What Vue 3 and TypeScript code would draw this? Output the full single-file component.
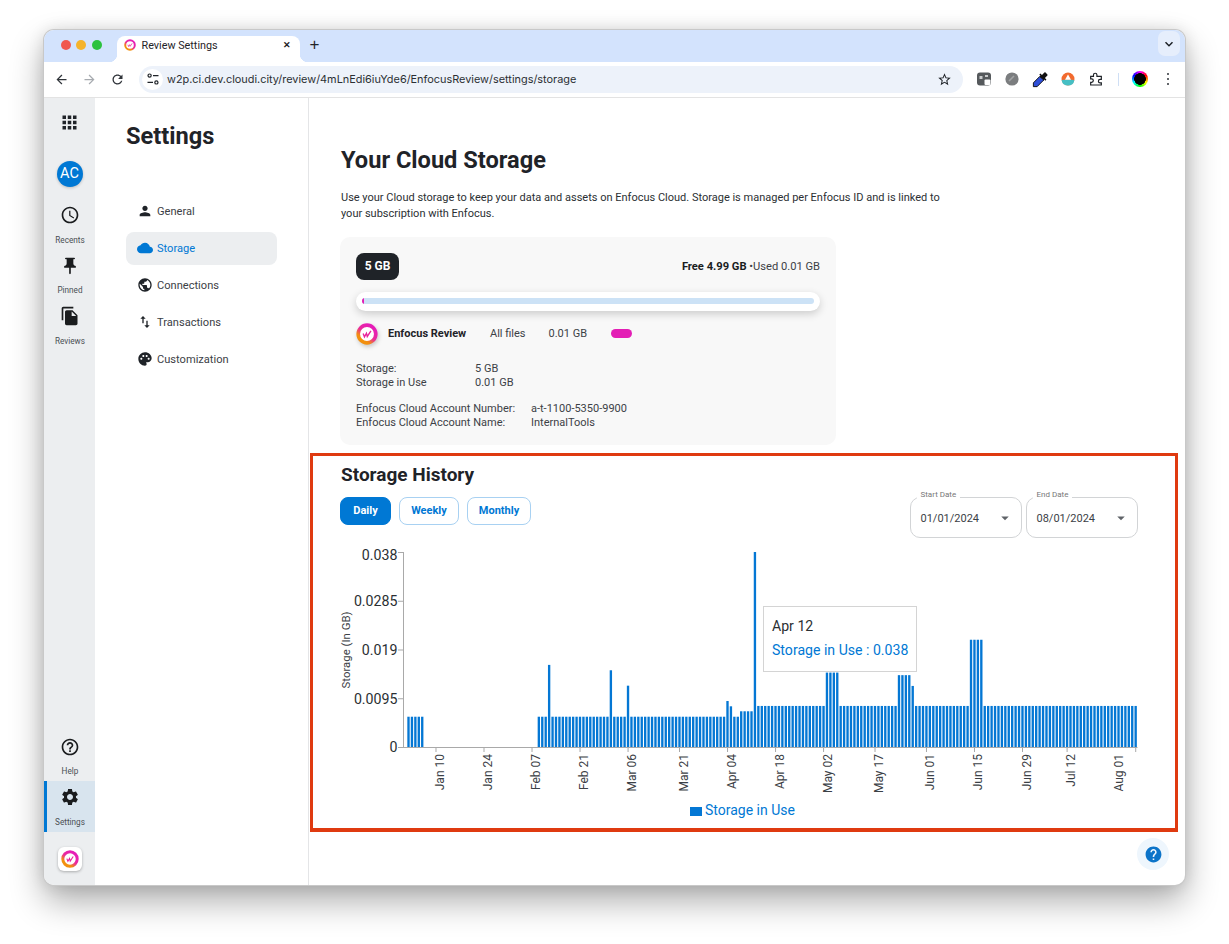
<script setup lang="ts">
import { computed } from 'vue'

const icons: Record<string, string> = {
  apps: 'M4 8h4V4H4v4zm6 12h4v-4h-4v4zm-6 0h4v-4H4v4zm0-6h4v-4H4v4zm6 0h4v-4h-4v4zm6-10v4h4V4h-4zm-6 4h4V4h-4v4zm6 6h4v-4h-4v4zm0 6h4v-4h-4v4z',
  schedule: 'M11.99 2C6.47 2 2 6.48 2 12s4.47 10 9.99 10C17.52 22 22 17.52 22 12S17.52 2 11.99 2zM12 20c-4.42 0-8-3.58-8-8s3.58-8 8-8 8 3.58 8 8-3.58 8-8 8zm.5-13H11v6l5.25 3.15.75-1.23-4.5-2.67z',
  pin: 'M16 9V4h1c.55 0 1-.45 1-1s-.45-1-1-1H7c-.55 0-1 .45-1 1s.45 1 1 1h1v5c0 1.66-1.34 3-3 3v2h5.97v7l1 1 1-1v-7H19v-2c-1.66 0-3-1.34-3-3z',
  files: 'M16 1H4c-1.1 0-2 .9-2 2v14h2V3h12V1zm-1 4l6 6v10c0 1.1-.9 2-2 2H7.99C6.89 23 6 22.1 6 21l.01-14c0-1.1.89-2 1.99-2h7zm-1 7h5.5L14 6.5V12z',
  helpOutline: 'M11 18h2v-2h-2v2zm1-16C6.48 2 2 6.48 2 12s4.48 10 10 10 10-4.48 10-10S17.52 2 12 2zm0 18c-4.41 0-8-3.59-8-8s3.59-8 8-8 8 3.59 8 8-3.59 8-8 8zm0-14c-2.21 0-4 1.79-4 4h2c0-1.1.9-2 2-2s2 .9 2 2c0 2-3 1.75-3 5h2c0-2.25 3-2.5 3-5 0-2.21-1.79-4-4-4z',
  gear: 'M19.14 12.94c.04-.3.06-.61.06-.94 0-.32-.02-.64-.07-.94l2.03-1.58c.18-.14.23-.41.12-.61l-1.92-3.32c-.12-.22-.37-.29-.59-.22l-2.39.96c-.5-.38-1.03-.7-1.62-.94l-.36-2.54c-.04-.24-.24-.41-.48-.41h-3.84c-.24 0-.43.17-.47.41l-.36 2.54c-.59.24-1.13.57-1.62.94l-2.39-.96c-.22-.08-.47 0-.59.22L2.74 8.87c-.12.21-.08.47.12.61l2.03 1.58c-.05.3-.09.63-.09.94s.02.64.07.94l-2.03 1.58c-.18.14-.23.41-.12.61l1.92 3.32c.12.22.37.29.59.22l2.39-.96c.5.38 1.03.7 1.62.94l.36 2.54c.05.24.24.41.48.41h3.84c.24 0 .44-.17.47-.41l.36-2.54c.59-.24 1.13-.56 1.62-.94l2.39.96c.22.08.47 0 .59-.22l1.92-3.32c.12-.22.07-.47-.12-.61l-2.01-1.58zM12 15.6c-1.98 0-3.6-1.62-3.6-3.6s1.62-3.6 3.6-3.6 3.6 1.62 3.6 3.6-1.62 3.6-3.6 3.6z',
  person: 'M12 12c2.21 0 4-1.79 4-4s-1.79-4-4-4-4 1.79-4 4 1.79 4 4 4zm0 2c-2.67 0-8 1.34-8 4v2h16v-2c0-2.66-5.33-4-8-4z',
  cloud: 'M19.35 10.04C18.67 6.59 15.64 4 12 4 9.11 4 6.6 5.64 5.35 8.04 2.34 8.36 0 10.91 0 14c0 3.31 2.69 6 6 6h13c2.76 0 5-2.24 5-5 0-2.64-2.05-4.78-4.65-4.96z',
  globe: 'M12 2C6.48 2 2 6.48 2 12s4.48 10 10 10 10-4.48 10-10S17.52 2 12 2zm-1 17.93c-3.95-.49-7-3.85-7-7.93 0-.62.08-1.21.21-1.79L9 15v1c0 1.1.9 2 2 2v1.93zm6.9-2.54c-.26-.81-1-1.39-1.9-1.39h-1v-3c0-.55-.45-1-1-1H8v-2h2c.55 0 1-.45 1-1V7h2c1.1 0 2-.9 2-2v-.41c2.93 1.19 5 4.06 5 7.41 0 2.08-.8 3.97-2.1 5.39z',
  swap: 'M16 17.01V10h-2v7.01h-3L15 21l4-3.99h-3zM9 3L5 6.99h3V14h2V6.99h3L9 3z',
  palette: 'M12 2C6.49 2 2 6.49 2 12s4.49 10 10 10c1.38 0 2.5-1.12 2.5-2.5 0-.61-.23-1.2-.64-1.67-.08-.1-.13-.21-.13-.33 0-.28.22-.5.5-.5H16c3.31 0 6-2.69 6-6 0-4.96-4.49-9-10-9zm5.5 11c-.83 0-1.5-.67-1.5-1.5s.67-1.5 1.5-1.5 1.5.67 1.5 1.5-.67 1.5-1.5 1.5zm-3-4c-.83 0-1.5-.67-1.5-1.5S13.67 6 14.5 6s1.5.67 1.5 1.5S15.33 9 14.5 9zM5 11.5c0-.83.67-1.5 1.5-1.5s1.5.67 1.5 1.5S7.33 13 6.5 13 5 12.33 5 11.5zm6-4c0 .83-.67 1.5-1.5 1.5S8 8.33 8 7.5 8.67 6 9.5 6s1.5.67 1.5 1.5z',
  help: 'M12 2C6.48 2 2 6.48 2 12s4.48 10 10 10 10-4.48 10-10S17.52 2 12 2zm1 17h-2v-2h2v2zm2.07-7.75l-.9.92C13.45 12.9 13 13.5 13 15h-2v-.5c0-1.1.45-2.1 1.17-2.83l1.24-1.26c.37-.36.59-.86.59-1.41 0-1.1-.9-2-2-2s-2 .9-2 2H8c0-2.21 1.79-4 4-4s4 1.79 4 4c0 .88-.36 1.68-.93 2.25z',
  caret: 'M7 10l5 5 5-5z',
  back: 'M20 11H7.83l5.59-5.59L12 4l-8 8 8 8 1.41-1.41L7.83 13H20v-2z',
  forward: 'M12 4l-1.41 1.41L16.17 11H4v2h12.17l-5.58 5.59L12 20l8-8z',
  reload: 'M17.65 6.35C16.2 4.9 14.21 4 12 4c-4.42 0-7.99 3.58-7.99 8s3.57 8 7.99 8c3.73 0 6.84-2.55 7.73-6h-2.08c-.82 2.33-3.04 4-5.65 4-3.31 0-6-2.69-6-6s2.69-6 6-6c1.66 0 3.14.69 4.22 1.78L13 11h7V4l-2.35 2.35z',
  star: 'M22 9.24l-7.19-.62L12 2 9.19 8.63 2 9.24l5.46 4.73L5.82 21 12 17.27 18.18 21l-1.63-7.03L22 9.24zM12 15.4l-3.76 2.27 1-4.28-3.32-2.88 4.38-.38L12 6.1l1.71 4.04 4.38.38-3.32 2.88 1 4.28L12 15.4z',
}

const railTop = [
  { label: 'Recents', icon: 'schedule' },
  { label: 'Pinned', icon: 'pin' },
  { label: 'Reviews', icon: 'files' },
]

const navItems = [
  { label: 'General', icon: 'person' },
  { label: 'Storage', icon: 'cloud', active: true },
  { label: 'Connections', icon: 'globe' },
  { label: 'Transactions', icon: 'swap' },
  { label: 'Customization', icon: 'palette' },
]

// chart is drawn in page coordinates, see viewBox on the svg
const x0 = 403.4
const band = 3.43
const baseY = 747
const plotH = 195
const maxVal = 0.038

const y = (v: number) => baseY - (v / maxVal) * plotH
const tickX = (i: number) => x0 + (i + 0.5) * band

function valueAt(i: number): number {
  if (i >= 1 && i <= 5) return 0.0059
  if (i < 39) return 0
  if (i === 42) return 0.016
  if (i === 60) return 0.01495
  if (i === 65) return 0.01195
  if (i === 94) return 0.00896
  if (i === 95) return 0.00793
  if (i >= 98 && i <= 101) return 0.00696
  if (i === 102) return 0.038
  if (i < 103) return 0.0059
  if (i >= 123 && i <= 126) return 0.0145
  if (i >= 144 && i <= 147) return 0.014
  if (i === 148) return 0.0119
  if (i >= 165 && i <= 168) return 0.0209
  return 0.008
}

const bars = computed(() => {
  const out: { x: number; y: number; h: number }[] = []
  for (let i = 0; i < 214; i++) {
    const v = valueAt(i)
    if (v > 0) out.push({ x: x0 + i * band + 0.5, y: y(v), h: (v / maxVal) * plotH })
  }
  return out
})

const yTicks = [
  { label: '0.038', v: 0.038, textY: 560 },
  { label: '0.0285', v: 0.0285, textY: 606 },
  { label: '0.019', v: 0.019, textY: 655 },
  { label: '0.0095', v: 0.0095, textY: 703.5 },
  { label: '0', v: 0, textY: 752 },
]

const xTicks = [
  { label: 'Jan 10', i: 9, dx: 8 },
  { label: 'Jan 24', i: 23, dx: 8 },
  { label: 'Feb 07', i: 37, dx: 8 },
  { label: 'Feb 21', i: 51, dx: 8 },
  { label: 'Mar 06', i: 65, dx: 8 },
  { label: 'Mar 21', i: 80, dx: 8 },
  { label: 'Apr 04', i: 94, dx: 8 },
  { label: 'Apr 18', i: 108, dx: 8 },
  { label: 'May 02', i: 122, dx: 8 },
  { label: 'May 17', i: 137, dx: 8 },
  { label: 'Jun 01', i: 152, dx: 8 },
  { label: 'Jun 15', i: 166, dx: 8 },
  { label: 'Jun 29', i: 180, dx: 8 },
  { label: 'Jul 12', i: 193, dx: 8 },
  // last label gets pushed back so it stays inside the plot
  { label: 'Aug 01', i: 213, dx: -12.5 },
]
</script>

<template>
  <div class="window">
    <svg class="defs" width="0" height="0" aria-hidden="true">
      <defs>
        <linearGradient id="logo-ring" x1="0.8" y1="0.1" x2="0.2" y2="0.9">
          <stop offset="0" stop-color="#e61cb8" />
          <stop offset="0.5" stop-color="#ea2a9c" />
          <stop offset="0.85" stop-color="#f2900f" />
        </linearGradient>
        <symbol id="logo" viewBox="0 0 24 24">
          <circle cx="12" cy="12" r="9.6" fill="#fff" stroke="url(#logo-ring)" stroke-width="4" />
          <path d="M7.8 11.5l1.4 3.6 2.2-3.8.9 3.4 4-6" fill="none" stroke="#e8249c" stroke-width="1.5" />
        </symbol>
      </defs>
    </svg>

    <div class="tabstrip">
      <div class="lights">
        <span class="light red"></span>
        <span class="light yellow"></span>
        <span class="light green"></span>
      </div>
      <div class="tab">
        <svg class="favicon" width="12" height="12"><use href="#logo" /></svg>
        <span class="tab-title">Review Settings</span>
        <span class="tab-close">✕</span>
      </div>
      <span class="new-tab">+</span>
      <div class="strip-gap"></div>
      <div class="tab-menu">
        <svg width="12" height="12" viewBox="0 0 12 12"><path d="M2.5 4.2L6 7.7l3.5-3.5" fill="none" stroke="#1f2328" stroke-width="1.5" /></svg>
      </div>
    </div>

    <div class="toolbar">
      <button class="tool"><svg width="15" height="15" viewBox="0 0 24 24"><path :d="icons.back" /></svg></button>
      <button class="tool muted"><svg width="15" height="15" viewBox="0 0 24 24"><path :d="icons.forward" /></svg></button>
      <button class="tool"><svg width="15" height="15" viewBox="0 0 24 24"><path :d="icons.reload" /></svg></button>
      <div class="omnibox">
        <span class="site-info">
          <svg width="14" height="14" viewBox="0 0 14 14" fill="none" stroke="#1f2328" stroke-width="1.2">
            <circle cx="3.6" cy="3.6" r="1.6" /><path d="M7 3.6h5.5M1.5 10.4H7" /><circle cx="10.4" cy="10.4" r="1.6" />
          </svg>
        </span>
        <span class="url">w2p.ci.dev.cloudi.city/review/4mLnEdi6iuYde6/EnfocusReview/settings/storage</span>
        <svg class="star" width="15" height="15" viewBox="0 0 24 24"><path :d="icons.star" /></svg>
      </div>
      <div class="ext first">
        <svg width="16" height="16" viewBox="0 0 16 16">
          <rect x="1" y="1.5" width="14" height="13" rx="3" fill="#55595c" />
          <rect x="8.5" y="8.5" width="6" height="5.5" rx="1" fill="#fff" />
          <path d="M3.5 5h3v3h-3zM9 4h3v2H9z" fill="#c9cbcc" />
        </svg>
      </div>
      <div class="ext">
        <svg width="16" height="16" viewBox="0 0 16 16">
          <circle cx="8" cy="8" r="6.6" fill="#7b7d7f" />
          <path d="M5 10l5-5" stroke="#a2a4a5" stroke-width="1.6" />
        </svg>
      </div>
      <div class="ext">
        <svg width="19" height="19" viewBox="0 0 24 24">
          <path d="M20.71 5.63l-2.34-2.34c-.39-.39-1.02-.39-1.41 0l-3.12 3.12-1.93-1.91-1.41 1.41 1.42 1.42-1 1L16 13.6l.67-1.52 1.42 1.42 1.41-1.41-1.92-1.92 3.12-3.12c.4-.4.4-1.03.01-1.42z" fill="#111" />
          <path d="M10.9 8.3L3 16.25V21h4.75l8.4-8.4z" fill="#2f4fd8" stroke="#111" stroke-width="1.2" />
        </svg>
      </div>
      <div class="ext">
        <svg width="16" height="16" viewBox="0 0 16 16">
          <circle cx="8" cy="8" r="6.5" fill="#f26a2e" />
          <path d="M1.6 9.2a6.5 6.5 0 0 0 12.8 0L12 8.8H4z" fill="#45bfc4" />
          <path d="M8 3.6L5 8.8h6z" fill="#fff" />
        </svg>
      </div>
      <div class="ext">
        <svg width="16" height="16" viewBox="0 0 24 24" fill="none" stroke="#1f2328" stroke-width="1.8">
          <path d="M4 8h4.2V6a2.6 2.6 0 0 1 5.2 0v2H20v4.6h-1.8a2.6 2.6 0 0 0 0 5.2H20V21H4v-4h1.4a2.6 2.6 0 0 0 0-5.2H4z" />
        </svg>
      </div>
      <span class="sep"></span>
      <div class="ext ring-wrap"><span class="ring"></span></div>
      <div class="ext dots"><i></i><i></i><i></i></div>
    </div>

    <div class="content">
      <aside class="rail">
        <svg class="rail-apps" width="21" height="21" viewBox="0 0 24 24"><path :d="icons.apps" /></svg>
        <div class="avatar">AC</div>
        <div v-for="item in railTop" :key="item.label" class="rail-item">
          <svg width="20" height="20" viewBox="0 0 24 24"><path :d="icons[item.icon]" /></svg>
          <span>{{ item.label }}</span>
        </div>
        <div class="rail-space"></div>
        <div class="rail-item">
          <svg width="20" height="20" viewBox="0 0 24 24"><path :d="icons.helpOutline" /></svg>
          <span>Help</span>
        </div>
        <div class="rail-item current">
          <svg width="20" height="20" viewBox="0 0 24 24"><path :d="icons.gear" /></svg>
          <span>Settings</span>
        </div>
        <div class="rail-logo">
          <svg width="18" height="18"><use href="#logo" /></svg>
        </div>
      </aside>

      <nav class="sidebar">
        <h2 class="sidebar-title">Settings</h2>
        <ul class="nav">
          <li v-for="item in navItems" :key="item.label" class="nav-item" :class="{ active: item.active }">
            <svg width="16" height="16" viewBox="0 0 24 24"><path :d="icons[item.icon]" /></svg>
            <span>{{ item.label }}</span>
          </li>
        </ul>
      </nav>

      <main class="main">
        <div class="top">
          <h1>Your Cloud Storage</h1>
          <p class="intro">Use your Cloud storage to keep your data and assets on Enfocus Cloud. Storage is managed per Enfocus ID and is linked to your subscription with Enfocus.</p>
          <div class="card">
            <div class="card-head">
              <span class="chip">5 GB</span>
              <span class="free"><b>Free 4.99 GB</b> •Used 0.01 GB</span>
            </div>
            <div class="meter"><div class="meter-track"><span class="meter-used"></span></div></div>
            <div class="usage">
              <svg class="usage-logo" width="22" height="22"><use href="#logo" /></svg>
              <b class="usage-name">Enfocus Review</b>
              <span class="usage-files">All files</span>
              <span class="usage-size">0.01 GB</span>
              <span class="usage-pill"></span>
            </div>
            <div class="facts narrow">
              <span>Storage:</span><span>5 GB</span>
              <span>Storage in Use</span><span>0.01 GB</span>
            </div>
            <div class="facts wide">
              <span>Enfocus Cloud Account Number:</span><span>a-t-1100-5350-9900</span>
              <span>Enfocus Cloud Account Name:</span><span>InternalTools</span>
            </div>
          </div>
        </div>

        <section class="history">
          <h2>Storage History</h2>
          <div class="controls">
            <div class="ranges">
              <button class="range on">Daily</button>
              <button class="range">Weekly</button>
              <button class="range">Monthly</button>
            </div>
            <div class="dates">
              <div class="date">
                <label>Start Date</label>
                <span>01/01/2024</span>
                <svg width="18" height="18" viewBox="0 0 24 24"><path :d="icons.caret" /></svg>
              </div>
              <div class="date">
                <label>End Date</label>
                <span>08/01/2024</span>
                <svg width="18" height="18" viewBox="0 0 24 24"><path :d="icons.caret" /></svg>
              </div>
            </div>
          </div>

          <div class="chart">
            <svg width="834" height="280" viewBox="340 545 834 280">
              <text class="axis-title" transform="translate(349.5 650) rotate(-90)" text-anchor="middle">Storage (In GB)</text>
              <rect v-for="(b, i) in bars" :key="i" class="bar" :x="b.x" :y="b.y" width="2.35" :height="b.h" />
              <line class="axis" x1="403.5" y1="552" x2="403.5" :y2="baseY" />
              <line class="axis" x1="403" :y1="baseY + 0.5" x2="1137.5" :y2="baseY + 0.5" />
              <g v-for="t in yTicks" :key="t.label">
                <line class="axis" x1="398" :y1="y(t.v) + 0.5" x2="403" :y2="y(t.v) + 0.5" />
                <text class="y-label" x="397.5" :y="t.textY" text-anchor="end">{{ t.label }}</text>
              </g>
              <g v-for="t in xTicks" :key="t.label">
                <line class="axis" :x1="tickX(t.i)" y1="747" :x2="tickX(t.i)" y2="752" />
                <text class="x-label" :transform="`translate(${tickX(t.i) + t.dx} 754) rotate(-90)`" text-anchor="end">{{ t.label }}</text>
              </g>
              <rect x="690" y="807" width="12" height="9" fill="#0477d4" />
              <text class="legend" x="705" y="815">Storage in Use</text>
            </svg>
            <div class="tooltip">
              <div class="tip-date">Apr 12</div>
              <div class="tip-value">Storage in Use : 0.038</div>
            </div>
          </div>
        </section>

        <button class="help-fab">
          <svg width="19" height="19" viewBox="0 0 24 24"><path :d="icons.help" /></svg>
        </button>
      </main>
    </div>
  </div>
</template>

<style>
html, body {
  background: #fff;
}
#app {
  padding: 30px 44px 59px;
}
</style>

<style scoped>
.window {
  width: 1141px;
  height: 855px;
  display: flex;
  flex-direction: column;
  border-radius: 10px;
  overflow: hidden;
  background: #fff;
  box-shadow: 0 0 0 1px #c8c8c8, 0 16px 34px rgba(0, 0, 0, 0.33), 0 0 16px rgba(0, 0, 0, 0.12);
  font-family: Roboto, "Liberation Sans", sans-serif;
  color: #1f2328;
}
.defs {
  position: absolute;
}
svg {
  display: block;
  flex: none;
}

.tabstrip {
  height: 32px;
  flex: none;
  display: flex;
  background: #d3e3fd;
}
.lights {
  display: flex;
  gap: 5.5px;
  padding: 10px 0 0 16.5px;
  width: 72.5px;
  box-sizing: border-box;
}
.light {
  width: 10px;
  height: 10px;
  border-radius: 50%;
}
.red { background: #f0584f; }
.yellow { background: #f5b32c; }
.green { background: #2cc23f; }
.tab {
  position: relative;
  margin-top: 5.5px;
  width: 183px;
  height: 26.5px;
  display: flex;
  align-items: center;
  background: #fff;
  border-radius: 8px 8px 0 0;
  padding: 0 9px 7.5px 7px;
  box-sizing: border-box;
}
.tab::before,
.tab::after {
  content: "";
  position: absolute;
  bottom: 0;
  width: 8px;
  height: 8px;
}
.tab::before {
  left: -8px;
  background: radial-gradient(circle at 0 0, #d3e3fd 8px, #fff 8.5px);
}
.tab::after {
  right: -8px;
  background: radial-gradient(circle at 100% 0, #d3e3fd 8px, #fff 8.5px);
}
.tab-title {
  margin-left: 6px;
  font-size: 10.8px;
  flex: 1;
}
.tab-close {
  font-size: 9px;
  font-weight: 700;
}
.new-tab {
  margin: 5px 0 0 7px;
  width: 16px;
  font-family: "Liberation Sans", sans-serif;
  font-size: 17px;
  line-height: 20px;
  text-align: center;
}
.strip-gap {
  flex: 1;
}
.tab-menu {
  margin: 1px 5px 0 0;
  width: 22px;
  height: 25px;
  display: flex;
  align-items: center;
  justify-content: center;
  background: #e6eefc;
  border-radius: 7px;
}

.toolbar {
  height: 36px;
  flex: none;
  box-sizing: border-box;
  border-bottom: 1px solid #e3e3e3;
  display: flex;
  align-items: center;
  gap: 4px;
  padding: 0 5px 1px 5px;
  background: #fff;
}
.tool {
  width: 24px;
  height: 24px;
  display: flex;
  align-items: center;
  justify-content: center;
  background: none;
  border: 0;
  padding: 0;
  fill: #30343a;
}
.tool.muted {
  fill: #a7abb0;
}
.omnibox {
  margin-left: 6px;
  flex: 1;
  height: 27px;
  display: flex;
  align-items: center;
  background: #edf2fa;
  border-radius: 14px;
  padding: 0 11px 0 3px;
}
.site-info {
  width: 21px;
  height: 21px;
  border-radius: 50%;
  background: #fff;
  display: flex;
  align-items: center;
  justify-content: center;
}
.url {
  margin-left: 4px;
  flex: 1;
  font-family: Inter, Roboto, sans-serif;
  font-size: 10.9px;
  color: #2b2f33;
}
.star {
  fill: #1f2328;
}
.ext {
  width: 24px;
  height: 24px;
  display: flex;
  align-items: center;
  justify-content: center;
}
.ext.first {
  margin-left: 5px;
}
.sep {
  width: 1px;
  height: 13px;
  margin-left: 6px;
  background: #cfdff5;
}
.ring-wrap {
  margin-left: 5px;
}
.ring {
  width: 16px;
  height: 16px;
  border-radius: 50%;
  background:
    radial-gradient(circle, #000 0 5.6px, transparent 6px),
    conic-gradient(#f0f, #f00, #ff0, #0f0, #0ff, #00f, #f0f);
}
.dots {
  flex-direction: column;
  gap: 2.6px;
}
.dots i {
  width: 2.6px;
  height: 2.6px;
  border-radius: 50%;
  background: #30343a;
}

.content {
  flex: 1;
  min-height: 0;
  display: flex;
}

.rail {
  width: 51px;
  flex: none;
  display: flex;
  flex-direction: column;
  align-items: center;
  background: #eceef0;
}
.rail-apps {
  margin-top: 13.5px;
  fill: #1f2328;
}
.avatar {
  margin-top: 28px;
  margin-bottom: 12.5px;
  width: 26px;
  height: 26px;
  border-radius: 50%;
  background: #0078d4;
  color: #fff;
  font-size: 14.5px;
  line-height: 26px;
  text-align: center;
  box-shadow: 0 1px 3px rgba(0, 0, 0, 0.2);
}
.rail-item {
  width: 100%;
  height: 50.5px;
  flex: none;
  box-sizing: border-box;
  padding: 6px 0 0 1px;
  display: flex;
  flex-direction: column;
  align-items: center;
  fill: #1a1c1e;
}
.rail-item span {
  margin-top: 8.5px;
  font-size: 8.2px;
  line-height: 12px;
  color: #4a4f54;
}
.rail-item.current {
  height: 51px;
  background: #d8e4ee;
  border-left: 3px solid #0078d4;
  padding: 6px 2px 0 0;
}
.rail-space {
  flex: 1;
}
.rail-logo {
  margin: 15px 0 14px;
  width: 24px;
  height: 24px;
  border-radius: 6px;
  background: #fff;
  box-shadow: 0 1px 3px rgba(0, 0, 0, 0.28);
  display: flex;
  align-items: center;
  justify-content: center;
}

.sidebar {
  width: 214px;
  flex: none;
  box-sizing: border-box;
  border-right: 1px solid #e4e5e7;
  padding: 23px 0 0 31px;
}
.sidebar-title {
  margin: 0;
  font-size: 23.6px;
  line-height: 30px;
  font-weight: 700;
}
.nav {
  list-style: none;
  margin: 44px 0 0;
  padding: 0;
  width: 151px;
  display: flex;
  flex-direction: column;
  gap: 4px;
}
.nav-item {
  height: 33px;
  box-sizing: border-box;
  display: flex;
  align-items: center;
  gap: 4px;
  padding: 0 0 1px 11px;
  border-radius: 8px;
  font-size: 11.1px;
  color: #3c4146;
  fill: #1f2328;
}
.nav-item.active {
  background: #eceef0;
  color: #0078d4;
  fill: #0078d4;
}

.main {
  flex: 1;
  min-width: 0;
  position: relative;
}
.top {
  padding: 49px 0 0 31px;
}
h1 {
  margin: 0;
  padding-left: 1px;
  font-size: 23.6px;
  line-height: 26px;
  font-weight: 700;
}
.intro {
  margin: 17px 0 0;
  padding-left: 1px;
  width: 610px;
  font-size: 11px;
  line-height: 16px;
  color: #2b2f33;
}
.card {
  margin-top: 15px;
  width: 496px;
  box-sizing: border-box;
  padding: 16px 16px 15px;
  border-radius: 10px;
  background: #f8f8f8;
  font-size: 11px;
  color: #3c4146;
}
.card-head {
  display: flex;
  align-items: center;
  justify-content: space-between;
}
.chip {
  width: 43px;
  height: 27px;
  border-radius: 8px;
  background: #1f2328;
  color: #fff;
  font-size: 12px;
  font-weight: 700;
  line-height: 27px;
  text-align: center;
}
.free {
  font-size: 11.15px;
}
.free b {
  color: #1a1c1e;
}
.meter {
  margin-top: 11.5px;
  height: 19px;
  box-sizing: border-box;
  padding: 6.5px 6px;
  border-radius: 10px;
  background: #fff;
  box-shadow: 0 3px 9px rgba(0, 0, 0, 0.18);
}
.meter-track {
  height: 6px;
  border-radius: 3px;
  background: #cce2f6;
  overflow: hidden;
}
.meter-used {
  display: block;
  width: 2px;
  height: 100%;
  background: #e31eb5;
}
.usage {
  margin-top: 13px;
  height: 20px;
  display: flex;
  align-items: center;
}
.usage-logo {
  filter: drop-shadow(1px 2px 2px rgba(0, 0, 0, 0.2));
}
.usage-name {
  margin-left: 10px;
  width: 102px;
  flex: none;
  color: #1f2328;
}
.usage-files {
  width: 58.5px;
  flex: none;
}
.usage-size {
  width: 62.5px;
  flex: none;
}
.usage-pill {
  width: 20.5px;
  height: 9px;
  border-radius: 5px;
  background: #e31eb5;
}
.facts {
  display: grid;
  line-height: 14px;
}
.facts.narrow {
  margin-top: 18px;
  grid-template-columns: 119px auto;
}
.facts.wide {
  margin-top: 12px;
  grid-template-columns: 175px auto;
}

.history {
  margin: 8px 7.5px 0 1px;
  height: 379px;
  box-sizing: border-box;
  border: 3px solid #df3a10;
  border-bottom-width: 4px;
  padding: 7px 37px 0 27px;
}
.history h2 {
  margin: 0;
  padding-left: 1px;
  font-size: 19px;
  line-height: 24px;
  font-weight: 700;
}
.controls {
  margin-top: 10px;
  height: 41px;
  display: flex;
  justify-content: space-between;
}
.ranges {
  display: flex;
  gap: 8px;
  align-items: flex-start;
}
.range {
  height: 28px;
  width: 60px;
  padding: 0;
  border: 1px solid #a8d1f2;
  border-radius: 8px;
  background: #fff;
  color: #0078d4;
  font: 700 11px Roboto, sans-serif;
}
.range:first-child {
  width: 51px;
}
.range:last-child {
  width: 64px;
}
.range.on {
  background: #0078d4;
  border-color: #0078d4;
  color: #fff;
}
.dates {
  display: flex;
  gap: 4px;
}
.date {
  position: relative;
  width: 112px;
  box-sizing: border-box;
  border: 1px solid #d2d4d6;
  border-radius: 10px;
  display: flex;
  align-items: center;
  justify-content: space-between;
  padding: 2px 7px 0 10px;
  font-size: 11px;
  color: #3c4146;
  fill: #5f6368;
}
.date label {
  position: absolute;
  top: -8px;
  left: 6px;
  padding: 0 4px;
  background: #fff;
  font-size: 8px;
  line-height: 10px;
  color: #777;
}
.chart {
  position: relative;
  margin-top: 7px;
}
.bar {
  fill: #0477d4;
}
.axis {
  stroke: #a9a9a9;
  stroke-width: 1;
}
.axis-title {
  font-size: 11.4px;
  fill: #3c4146;
}
.y-label {
  font-size: 14.2px;
  fill: #2b2f33;
}
.x-label {
  font-size: 12px;
  fill: #3c4146;
}
.legend {
  font-size: 14px;
  fill: #0078d4;
}
.tooltip {
  position: absolute;
  left: 423px;
  top: 61px;
  width: 154px;
  height: 66px;
  box-sizing: border-box;
  padding: 7px 8px;
  background: #fff;
  border: 1px solid #d4d4d4;
  font-size: 14.1px;
  line-height: 24.5px;
  white-space: nowrap;
}
.tip-date {
  color: #2b2f33;
}
.tip-value {
  color: #0078d4;
}
.help-fab {
  position: absolute;
  right: 16px;
  bottom: 15px;
  width: 32px;
  height: 32px;
  padding: 0;
  border: 0;
  border-radius: 50%;
  background: #eef6fd;
  display: flex;
  align-items: center;
  justify-content: center;
  fill: #0c74c9;
}
</style>
